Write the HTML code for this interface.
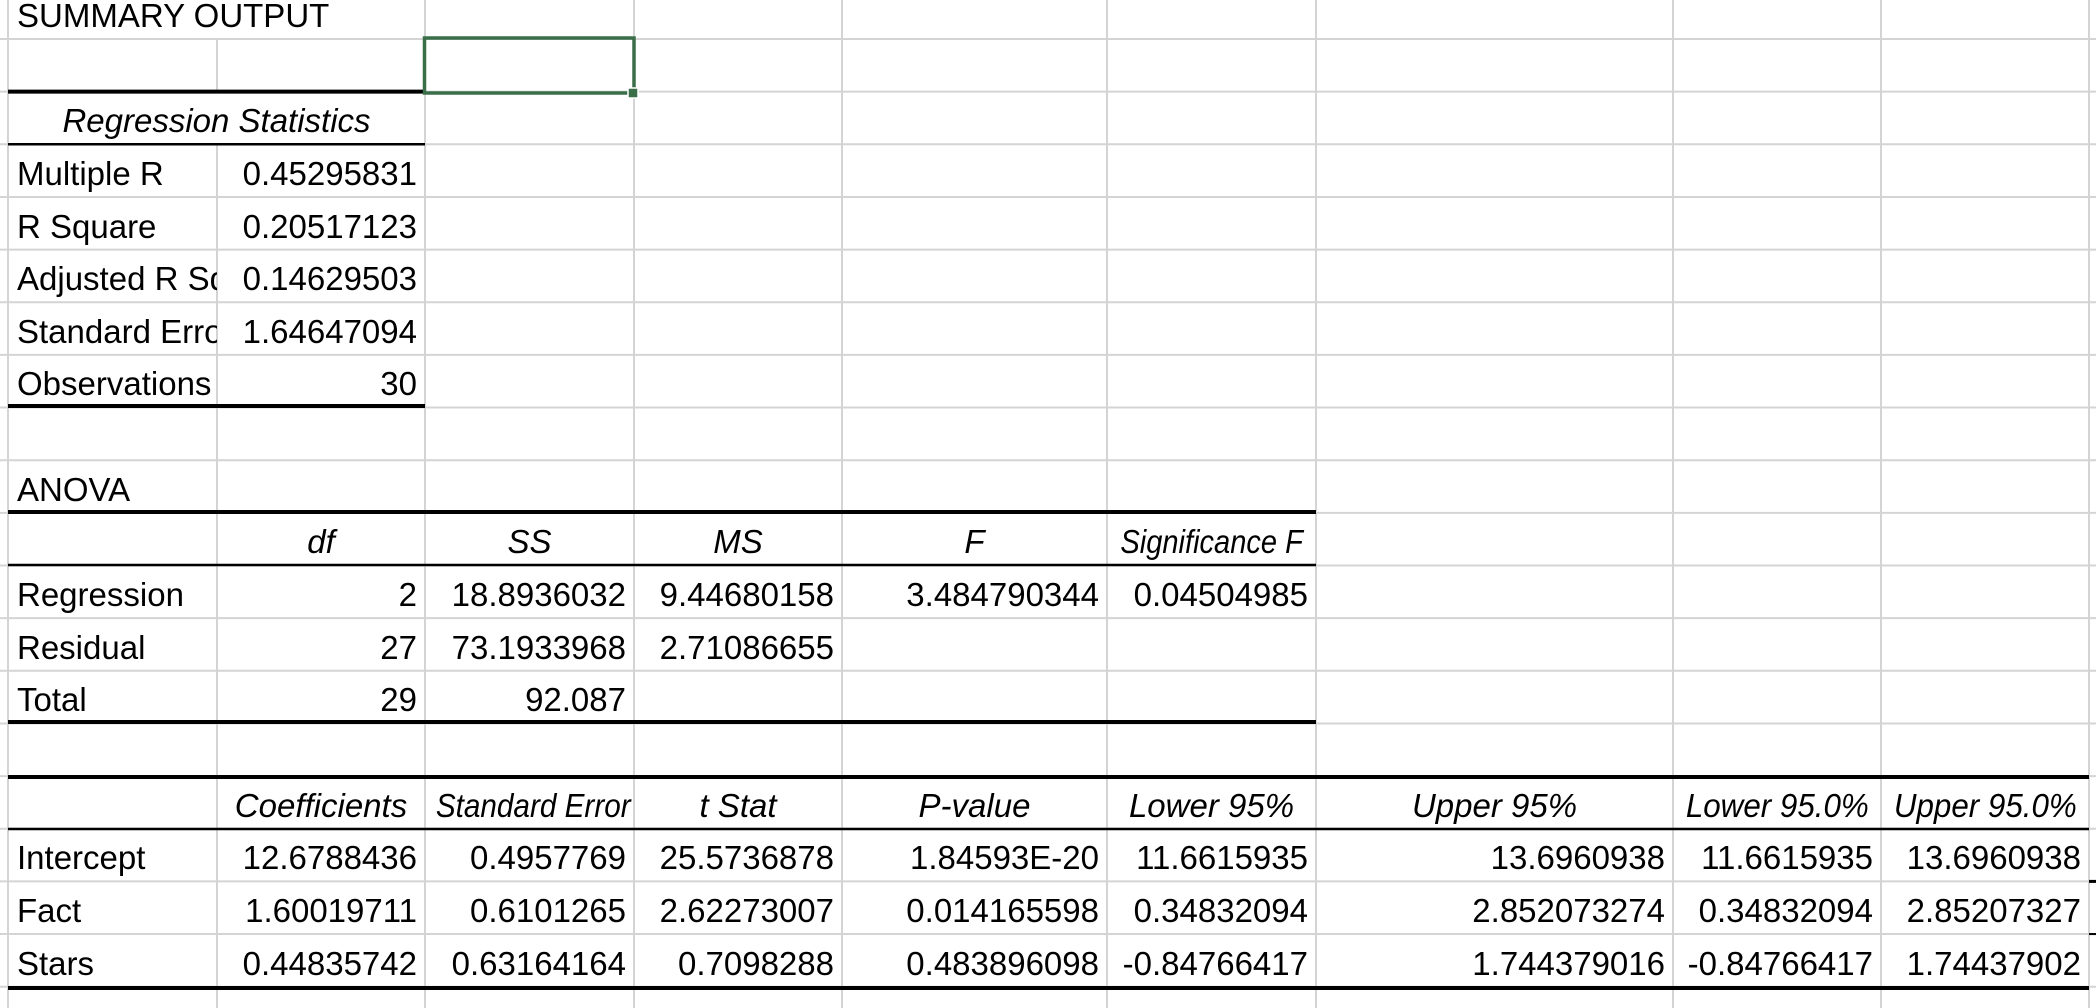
<!DOCTYPE html>
<html><head><meta charset="utf-8"><style>
html,body{margin:0;padding:0;background:#fff;}
body{width:2096px;height:1008px;overflow:hidden;position:relative;font-family:"Liberation Sans",sans-serif;font-size:33px;color:#000;}
svg{position:absolute;left:0;top:0;}
.c{position:absolute;height:52.65px;box-sizing:border-box;padding:12.6px 8px 0 9px;line-height:33px;white-space:nowrap;overflow:hidden;}
.r{text-align:right;}
.m{text-align:center;font-style:italic;padding-left:0;padding-right:0;}
.m span{display:inline-block;}
.ov{overflow:visible;}
</style></head><body>
<svg width="2096" height="1008">
<g stroke="#d4d4d4" stroke-width="2">
<line x1="0" y1="39" x2="2096" y2="39"/><line x1="0" y1="91.65" x2="2096" y2="91.65"/><line x1="0" y1="144.3" x2="2096" y2="144.3"/><line x1="0" y1="196.95" x2="2096" y2="196.95"/><line x1="0" y1="249.6" x2="2096" y2="249.6"/><line x1="0" y1="302.25" x2="2096" y2="302.25"/><line x1="0" y1="354.9" x2="2096" y2="354.9"/><line x1="0" y1="407.55" x2="2096" y2="407.55"/><line x1="0" y1="460.2" x2="2096" y2="460.2"/><line x1="0" y1="512.85" x2="2096" y2="512.85"/><line x1="0" y1="565.5" x2="2096" y2="565.5"/><line x1="0" y1="618.15" x2="2096" y2="618.15"/><line x1="0" y1="670.8" x2="2096" y2="670.8"/><line x1="0" y1="723.45" x2="2096" y2="723.45"/><line x1="0" y1="776.1" x2="2096" y2="776.1"/><line x1="0" y1="828.75" x2="2096" y2="828.75"/><line x1="0" y1="881.4" x2="2096" y2="881.4"/><line x1="0" y1="934.05" x2="2096" y2="934.05"/><line x1="0" y1="986.7" x2="2096" y2="986.7"/>
<line x1="8" y1="0" x2="8" y2="1008"/>
<line x1="217" y1="39" x2="217" y2="91.65"/><line x1="217" y1="144.3" x2="217" y2="1008"/>
<line x1="425" y1="0" x2="425" y2="1008"/><line x1="634" y1="0" x2="634" y2="1008"/><line x1="842" y1="0" x2="842" y2="1008"/><line x1="1107" y1="0" x2="1107" y2="1008"/><line x1="1316" y1="0" x2="1316" y2="1008"/><line x1="1673" y1="0" x2="1673" y2="1008"/><line x1="1881" y1="0" x2="1881" y2="1008"/><line x1="2089" y1="0" x2="2089" y2="1008"/>
</g>
</svg>

<div class="c ov" style="left:8px;top:-13.65px;width:400px;">SUMMARY OUTPUT</div>
<div class="c m" style="left:8px;top:91.65px;width:417px;">Regression Statistics</div>
<div class="c" style="left:8px;top:144.3px;width:209px;">Multiple R</div><div class="c r" style="left:217px;top:144.3px;width:208px;">0.45295831</div>
<div class="c" style="left:8px;top:196.95px;width:209px;">R Square</div><div class="c r" style="left:217px;top:196.95px;width:208px;">0.20517123</div>
<div class="c" style="left:8px;top:249.6px;width:209px;padding-right:0;">Adjusted R Square</div><div class="c r" style="left:217px;top:249.6px;width:208px;">0.14629503</div>
<div class="c" style="left:8px;top:302.25px;width:209px;padding-right:0;">Standard Error</div><div class="c r" style="left:217px;top:302.25px;width:208px;">1.64647094</div>
<div class="c" style="left:8px;top:354.9px;width:209px;">Observations</div><div class="c r" style="left:217px;top:354.9px;width:208px;">30</div>

<div class="c" style="left:8px;top:460.2px;width:209px;">ANOVA</div>
<div class="c m" style="left:217px;top:512.85px;width:208px;">df</div>
<div class="c m" style="left:425px;top:512.85px;width:209px;">SS</div>
<div class="c m" style="left:634px;top:512.85px;width:208px;">MS</div>
<div class="c m" style="left:842px;top:512.85px;width:265px;">F</div>
<div class="c m ov" style="left:1107px;top:512.85px;width:209px;"><span style="transform:scaleX(0.88);">Significance F</span></div>

<div class="c" style="left:8px;top:565.5px;width:209px;">Regression</div><div class="c r" style="left:217px;top:565.5px;width:208px;">2</div><div class="c r" style="left:425px;top:565.5px;width:209px;">18.8936032</div><div class="c r" style="left:634px;top:565.5px;width:208px;">9.44680158</div><div class="c r" style="left:842px;top:565.5px;width:265px;">3.484790344</div><div class="c r" style="left:1107px;top:565.5px;width:209px;">0.04504985</div>
<div class="c" style="left:8px;top:618.15px;width:209px;">Residual</div><div class="c r" style="left:217px;top:618.15px;width:208px;">27</div><div class="c r" style="left:425px;top:618.15px;width:209px;">73.1933968</div><div class="c r" style="left:634px;top:618.15px;width:208px;">2.71086655</div>
<div class="c" style="left:8px;top:670.8px;width:209px;">Total</div><div class="c r" style="left:217px;top:670.8px;width:208px;">29</div><div class="c r" style="left:425px;top:670.8px;width:209px;">92.087</div>

<div class="c m" style="left:217px;top:776.1px;width:208px;">Coefficients</div>
<div class="c m ov" style="left:425px;top:776.1px;width:209px;"><span style="transform:scaleX(0.9);">Standard Error</span></div>
<div class="c m" style="left:634px;top:776.1px;width:208px;">t Stat</div>
<div class="c m" style="left:842px;top:776.1px;width:265px;">P-value</div>
<div class="c m" style="left:1107px;top:776.1px;width:209px;">Lower 95%</div>
<div class="c m" style="left:1316px;top:776.1px;width:357px;">Upper 95%</div>
<div class="c m ov" style="left:1673px;top:776.1px;width:208px;"><span style="transform:scaleX(0.95);">Lower 95.0%</span></div>
<div class="c m ov" style="left:1881px;top:776.1px;width:208px;"><span style="transform:scaleX(0.95);">Upper 95.0%</span></div>

<div class="c" style="left:8px;top:828.75px;width:209px;">Intercept</div><div class="c r" style="left:217px;top:828.75px;width:208px;">12.6788436</div><div class="c r" style="left:425px;top:828.75px;width:209px;">0.4957769</div><div class="c r" style="left:634px;top:828.75px;width:208px;">25.5736878</div><div class="c r" style="left:842px;top:828.75px;width:265px;">1.84593E-20</div><div class="c r" style="left:1107px;top:828.75px;width:209px;">11.6615935</div><div class="c r" style="left:1316px;top:828.75px;width:357px;">13.6960938</div><div class="c r" style="left:1673px;top:828.75px;width:208px;">11.6615935</div><div class="c r" style="left:1881px;top:828.75px;width:208px;">13.6960938</div>
<div class="c" style="left:8px;top:881.4px;width:209px;">Fact</div><div class="c r" style="left:217px;top:881.4px;width:208px;">1.60019711</div><div class="c r" style="left:425px;top:881.4px;width:209px;">0.6101265</div><div class="c r" style="left:634px;top:881.4px;width:208px;">2.62273007</div><div class="c r" style="left:842px;top:881.4px;width:265px;">0.014165598</div><div class="c r" style="left:1107px;top:881.4px;width:209px;">0.34832094</div><div class="c r" style="left:1316px;top:881.4px;width:357px;">2.852073274</div><div class="c r" style="left:1673px;top:881.4px;width:208px;">0.34832094</div><div class="c r" style="left:1881px;top:881.4px;width:208px;">2.85207327</div>
<div class="c" style="left:8px;top:934.05px;width:209px;">Stars</div><div class="c r" style="left:217px;top:934.05px;width:208px;">0.44835742</div><div class="c r" style="left:425px;top:934.05px;width:209px;">0.63164164</div><div class="c r" style="left:634px;top:934.05px;width:208px;">0.7098288</div><div class="c r" style="left:842px;top:934.05px;width:265px;">0.483896098</div><div class="c r" style="left:1107px;top:934.05px;width:209px;">-0.84766417</div><div class="c r" style="left:1316px;top:934.05px;width:357px;">1.744379016</div><div class="c r" style="left:1673px;top:934.05px;width:208px;">-0.84766417</div><div class="c r" style="left:1881px;top:934.05px;width:208px;">1.74437902</div>

<svg width="2096" height="1008">
<g stroke="#000">
<line x1="8" y1="91.65" x2="425" y2="91.65" stroke-width="4"/>
<line x1="8" y1="144.3" x2="425" y2="144.3" stroke-width="2.5"/>
<line x1="8" y1="406" x2="425" y2="406" stroke-width="4"/>
<line x1="8" y1="512" x2="1316" y2="512" stroke-width="4"/>
<line x1="8" y1="565" x2="1316" y2="565" stroke-width="2.5"/>
<line x1="8" y1="722" x2="1316" y2="722" stroke-width="4"/>
<line x1="8" y1="777" x2="2089" y2="777" stroke-width="4"/>
<line x1="8" y1="829" x2="2089" y2="829" stroke-width="2.5"/>
<line x1="8" y1="988" x2="2089" y2="988" stroke-width="4"/>
<line x1="2089" y1="881.4" x2="2096" y2="881.4" stroke-width="3"/>
<line x1="2089" y1="934.05" x2="2096" y2="934.05" stroke-width="2"/>
</g>
<rect x="424.5" y="38" width="209.5" height="55" fill="none" stroke="#3a6e48" stroke-width="3.5"/>
<rect x="628" y="88" width="10" height="10" fill="#3a6e48" stroke="#fff" stroke-width="1.5"/>
</svg>
</body></html>
